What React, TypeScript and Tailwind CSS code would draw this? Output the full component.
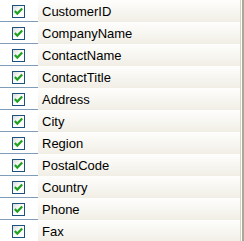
import React from 'react';

const fields = [
  'CustomerID',
  'CompanyName',
  'ContactName',
  'ContactTitle',
  'Address',
  'City',
  'Region',
  'PostalCode',
  'Country',
  'Phone',
  'Fax',
];

const CheckBox: React.FC = () => (
  <div className="w-[13px] h-[13px] border border-[#1c5180] bg-gradient-to-br from-[#dcdcd7] via-white to-white flex items-center justify-center">
    <svg width="11" height="11" viewBox="0 0 11 11">
      <path d="M1.8 5 L4.3 7.6 L9.2 2.4" fill="none" stroke="#21a121" strokeWidth="2.2" />
    </svg>
  </div>
);

const Row: React.FC<{ name: string }> = ({ name }) => (
  <div className="flex h-[22px] shrink-0">
    <div className="w-[38px] flex flex-col">
      <div className="flex-1 flex items-center pl-[12px] pt-[1px]">
        <CheckBox />
      </div>
      <div className="h-px bg-[#7f9db9]" />
    </div>
    <div className="flex-1 flex flex-col border-r border-[#d6d2c2]">
      <div className="flex-1 flex items-center pl-[4px] pt-[2px] bg-gradient-to-b from-[#fefefd] to-[#f0eee5] text-[13px] text-black font-['Liberation_Sans',Arial,sans-serif]">
        {name}
      </div>
      <div className="h-[2px] bg-[#e2ded2]" />
      <div className="h-px bg-white" />
    </div>
    <div className="w-px bg-white" />
  </div>
);

export default function App() {
  return (
    <div className="w-[244px] h-[241px] overflow-hidden bg-white flex">
      <div className="flex-1 flex flex-col">
        {fields.map((f) => (
          <Row key={f} name={f} />
        ))}
      </div>
      <div className="w-[2px] bg-[#aca899]" />
    </div>
  );
}
